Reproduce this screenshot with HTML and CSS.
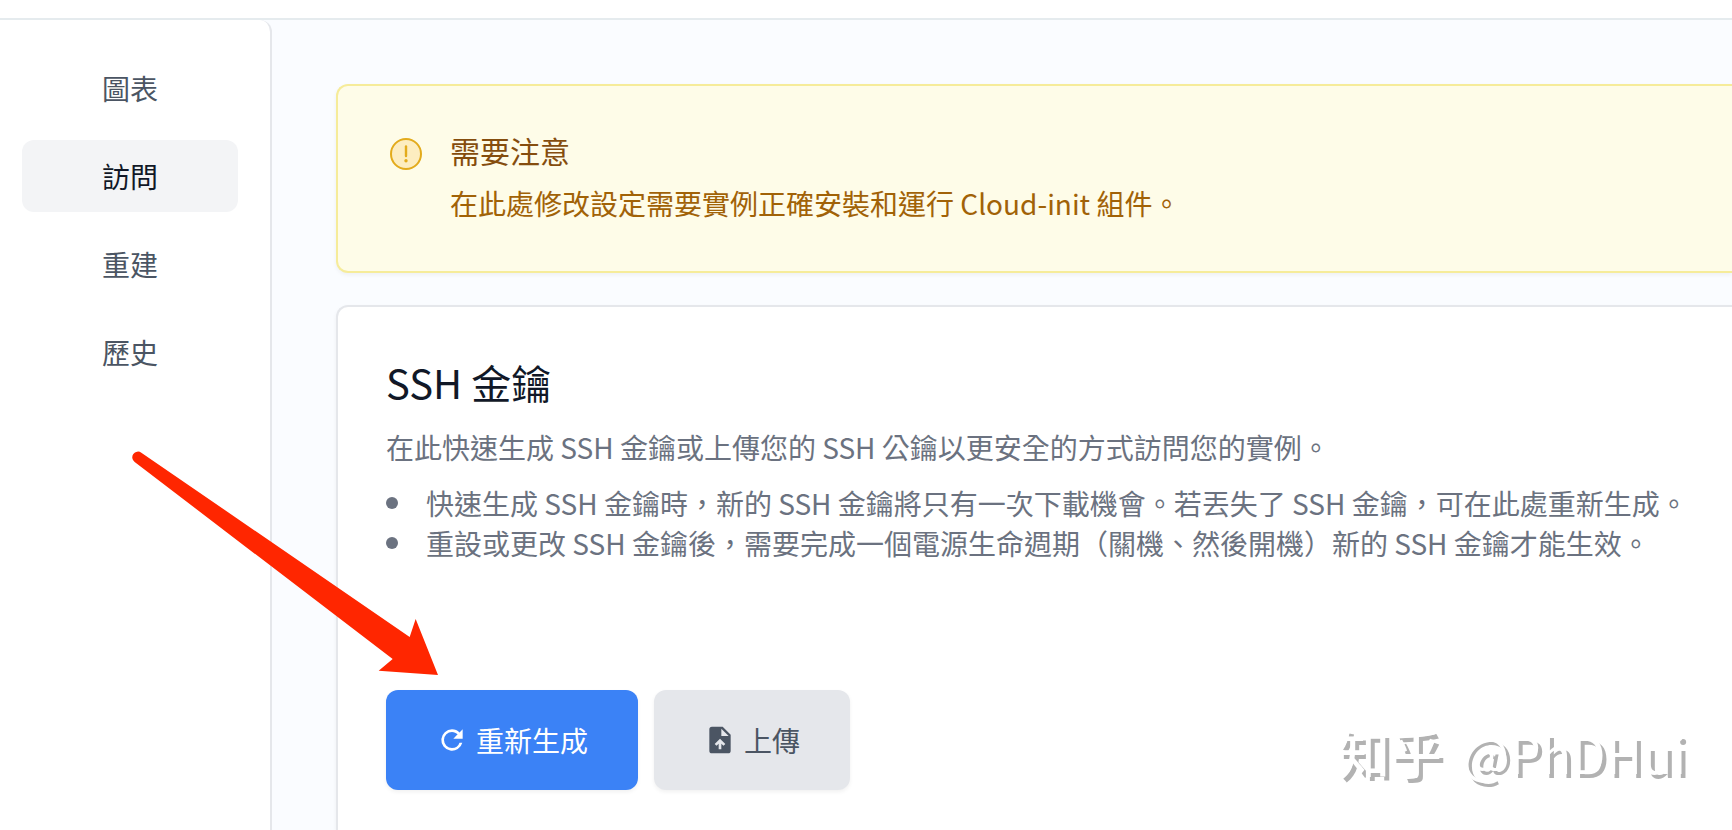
FILE: index.html
```html
<!DOCTYPE html>
<html lang="zh-Hant">
<head>
    <meta charset="UTF-8">
    <meta name="viewport" content="width=device-width, initial-scale=1.0">
    <title>SSH 金鑰</title>
    <link rel="stylesheet" href="styles.css">
</head>
<body>

<header class="topbar"></header>

<div class="layout">
    <nav class="sidebar">
        <a class="nav-item" href="#charts">圖表</a>
        <a class="nav-item active" href="#access">訪問</a>
        <a class="nav-item" href="#rebuild">重建</a>
        <a class="nav-item" href="#history">歷史</a>
    </nav>

    <main class="content">
        <section class="alert">
            <svg class="alert-icon" viewBox="0 0 32 32" aria-hidden="true">
                <circle cx="16" cy="16" r="15" fill="#fdedc0" stroke="#e3ab1c" stroke-width="2"/>
                <path d="M16 8.5v9.5" stroke="#e3ab1c" stroke-width="2.4" stroke-linecap="round"/>
                <circle cx="16" cy="22.7" r="1.7" fill="#e3ab1c"/>
            </svg>
            <div class="alert-body">
                <h2>需要注意</h2>
                <p>在此處修改設定需要實例正確安裝和運行 Cloud-init 組件。</p>
            </div>
        </section>

        <section class="card">
            <h1>SSH 金鑰</h1>
            <p>在此快速生成 SSH 金鑰或上傳您的 SSH 公鑰以更安全的方式訪問您的實例。</p>
            <ul class="notes">
                <li>快速生成 SSH 金鑰時，新的 SSH 金鑰將只有一次下載機會。若丟失了 SSH 金鑰，可在此處重新生成。</li>
                <li>重設或更改 SSH 金鑰後，需要完成一個電源生命週期（關機、然後開機）新的 SSH 金鑰才能生效。</li>
            </ul>
            <div class="actions">
                <button type="button" class="btn btn-primary">
                    <svg class="btn-icon" viewBox="0 0 24 24" aria-hidden="true">
                        <path fill="currentColor" d="M17.65 6.35A7.958 7.958 0 0 0 12 4a8 8 0 1 0 7.73 10h-2.08A5.99 5.99 0 0 1 12 18a6 6 0 1 1 0-12c1.66 0 3.14.69 4.22 1.78L13 11h7V4z"/>
                    </svg>
                    重新生成
                </button>
                <button type="button" class="btn btn-secondary">
                    <svg class="btn-icon" viewBox="0 0 24 24" aria-hidden="true">
                        <path fill="currentColor" fill-rule="evenodd" d="M6 2a2 2 0 0 0-2 2v16a2 2 0 0 0 2 2h12a2 2 0 0 0 2-2V8l-6-6zM13 3.5V9h5.5zM12 11l4 4-1.4 1.4-1.6-1.6V19h-2v-4.2l-1.6 1.6L8 15z"/>
                    </svg>
                    上傳
                </button>
            </div>
        </section>
    </main>
</div>

<svg class="arrow" viewBox="0 0 1080 810" aria-hidden="true">
    <path fill="#ff2600" d="M94 71L899 624L917 570L984 738L806 725L848 690L74 99A16 16 0 0 1 94 71z"/>
</svg>

<div class="watermark"><span class="watermark-site">知乎</span> <span>@PhDHui</span></div>

</body>
</html>
```

FILE: styles.css
```css
* {
    box-sizing: border-box;
}

body {
    display: flex;
    flex-direction: column;
    position: relative;
    min-height: 100vh;
    margin: 0;
    overflow: hidden;
    background-color: #fff;
    color: #6b7280;
    font-family: 'Noto Sans CJK TC', sans-serif;
    font-size: 28px;
    line-height: 40px;
}

h1, h2, p, ul {
    margin: 0;
    padding: 0;
    font-weight: 400;
}

.topbar {
    height: 20px;
    border-bottom: 2px solid #e5ebee;
}

.layout {
    display: flex;
    flex: 1;
    background-color: #fafcff;
}

/* Sidebar */
.sidebar {
    display: flex;
    flex-direction: column;
    flex: 0 0 272px;
    gap: 16px;
    padding: 32px 32px 32px 22px;
    background-color: #fff;
    border-right: 2px solid #e5e7eb;
    border-top-right-radius: 12px;
}

.nav-item {
    padding: 16px;
    border-radius: 12px;
    color: #4b5563;
    text-align: center;
    text-decoration: none;
}

.nav-item.active {
    background-color: #f3f4f6;
    color: #111827;
}

/* Content */
.content {
    display: flex;
    flex-direction: column;
    flex: 1;
    gap: 32px;
    min-width: 0;
    padding: 64px 0 0 64px;
}

.alert, .card {
    border: 2px solid #e5e7eb;
    border-right: 0;
    border-radius: 12px 0 0 12px;
    box-shadow: 0 2px 4px rgba(0, 0, 0, 0.05);
}

.alert {
    display: flex;
    gap: 28px;
    padding: 44px 52px 48px;
    background-color: #fefce8;
    border-color: #f6ec9a;
}

.alert-icon {
    width: 32px;
    height: 32px;
    margin-top: 8px;
}

.alert h2 {
    margin-bottom: 13px;
    color: #854d0e;
    font-size: 30px;
}

.alert p {
    color: #a16207;
}

.card {
    flex: 1;
    padding: 46px 0 0 48px;
    background-color: #fff;
    border-bottom: 0;
    border-radius: 12px 0 0 0;
}

.card h1 {
    margin-bottom: 16px;
    color: #111827;
    font-size: 40px;
    line-height: 58px;
}

.notes {
    margin-top: 16px;
    list-style: none;
}

.notes li {
    display: flex;
    align-items: center;
    gap: 28px;
}

.notes li::before {
    content: "";
    flex: 0 0 12px;
    height: 12px;
    border-radius: 50%;
    background-color: #6b7280;
}

.actions {
    display: flex;
    gap: 16px;
    margin-top: 127px;
}

.btn {
    display: flex;
    align-items: center;
    gap: 8px;
    padding: 30px 50px;
    border: 0;
    border-radius: 12px;
    font: inherit;
    box-shadow: 0 2px 4px rgba(0, 0, 0, 0.06);
}

.btn-primary {
    background-color: #3b82f6;
    color: #fff;
}

.btn-secondary {
    background-color: #e5e7eb;
    color: #4b5563;
}

.btn-icon {
    width: 32px;
    height: 32px;
}

/* Overlays */
.arrow {
    position: absolute;
    top: 429px;
    left: 110px;
    width: 360px;
}

.watermark {
    display: flex;
    align-items: center;
    gap: 20px;
    position: absolute;
    right: 46px;
    bottom: 42px;
    color: #fff;
    font-size: 50px;
    line-height: 72px;
    text-shadow: 4px 4px 0 #b2b2b2;
}

.watermark-site {
    font-size: 52px;
    font-weight: 500;
}
```
